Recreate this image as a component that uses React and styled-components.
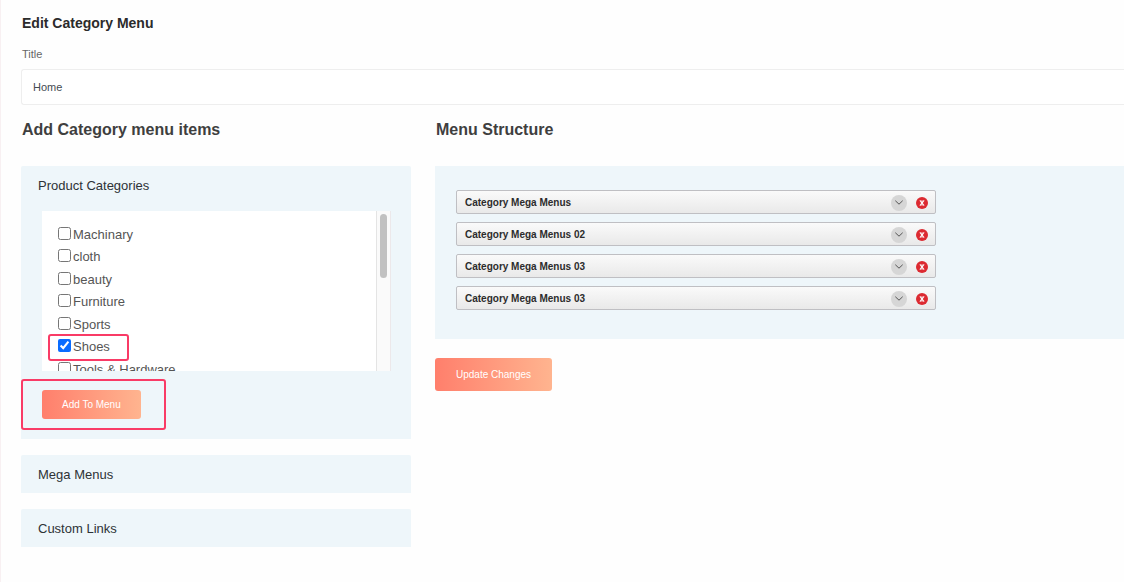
import React, { useState } from 'react';
import styled, { createGlobalStyle, css } from 'styled-components';

const GlobalStyle = createGlobalStyle`
	* {
		box-sizing: border-box;
	}

	body {
		margin: 0;
		background: #fefefe;
		font-family: 'Liberation Sans', Arial, sans-serif;
		color: #333;
	}

	h1, h2, h3, ul {
		margin: 0;
		padding: 0;
	}

	button, input {
		font-family: inherit;
	}
`;

const Page = styled.main`
	min-height: 100vh;
	padding: 14px 0 35px 20px;
	border-left: 1px solid #f8f0f2;
	overflow: hidden;
`;

const PageTitle = styled.h1`
	padding-left: 1px;
	font-size: 14px;
	line-height: 18px;
	color: #2b2b2b;
`;

const Field = styled.div`
	display: flex;
	flex-direction: column;
	gap: 8px;
	margin-top: 15px;
`;

const FieldLabel = styled.label`
	padding-left: 1px;
	font-size: 11px;
	line-height: 14px;
	color: #666;
`;

const TextInput = styled.input`
	width: 100%;
	height: 36px;
	padding: 0 11px;
	border: 1px solid #eee;
	border-right: 0;
	border-radius: 3px 0 0 3px;
	background: #fff;
	font-size: 11px;
	color: #444b52;
`;

const Columns = styled.div`
	display: grid;
	grid-template-columns: 390px minmax(0, 1fr);
	column-gap: 24px;
	align-items: start;
	margin-top: 15px;
`;

const ColumnTitle = styled.h2`
	padding-left: 1px;
	margin-bottom: 26px;
	font-size: 16px;
	line-height: 20px;
	color: #3f3f3f;
`;

const Accordion = styled.div`
	display: flex;
	flex-direction: column;
	gap: 16px;
`;

const Panel = styled.section`
	background: #eef6fa;
	border-radius: 2px 2px 0 0;
`;

const PanelHeader = styled.button`
	display: block;
	width: 100%;
	height: 38px;
	padding: 0 17px;
	border: 0;
	background: none;
	font-size: 13px;
	text-align: left;
	color: #2d3236;
	cursor: pointer;
`;

const PanelBody = styled.div`
	padding: 7px 20px 20px 21px;
`;

const ScrollBox = styled.div`
	display: flex;
	height: 160px;
	background: #fff;
`;

const CategoryList = styled.ul`
	flex: 1;
	padding: 13px 16px;
	list-style: none;
	overflow-y: auto;
	scrollbar-width: none;
`;

const ScrollTrack = styled.div`
	width: 15px;
	padding: 3px;
	border-left: 1px solid #e4e4e4;
	border-right: 1px solid #ece8ea;
	background: #fafafa;
`;

const ScrollThumb = styled.div`
	height: 64px;
	border-radius: 4px;
	background: #c1c1c1;
`;

const outline = css`
	position: absolute;
	border: 2px solid #f93b66;
	border-radius: 3px;
	content: '';
	pointer-events: none;
`;

const CategoryItem = styled.li`
	position: relative;
	width: fit-content;
	height: 22px;

	&:nth-child(even) {
		height: 23px;
	}

	${({ $marked }) =>
		$marked &&
		css`
			&::after {
				${outline}
				inset: -2px -19px -2px -10px;
			}
		`}
`;

const CategoryLabel = styled.label`
	display: flex;
	align-items: center;
	gap: 2px;
	font-size: 13px;
	line-height: 22px;
	color: #555;

	input {
		width: 13px;
		height: 13px;
		margin: 0 0 3px;
		accent-color: #0a6cff;
	}
`;

const ButtonArea = styled.div`
	position: relative;
	width: fit-content;
	margin-top: 19px;

	&::after {
		${outline}
		inset: -11px -25px -11px -21px;
	}
`;

const GradientButton = styled.button`
	display: block;
	height: ${({ $large }) => ($large ? 33 : 29)}px;
	padding: 0 ${({ $large }) => ($large ? 21 : 20)}px;
	border: 0;
	border-radius: 3px;
	background: linear-gradient(to right, #ff7f6c, #ffb48f);
	font-size: 10px;
	color: #fff;
	cursor: pointer;
`;

const Structure = styled.div`
	min-height: 173px;
	margin-bottom: 19px;
	padding: 24px 21px;
	background: #eef6fa;
`;

const MenuList = styled.ul`
	display: flex;
	flex-direction: column;
	gap: 8px;
	max-width: 480px;
	list-style: none;
`;

const MenuItem = styled.li`
	display: flex;
	align-items: center;
	gap: 9px;
	height: 24px;
	padding: 2px 7px 0 8px;
	border: 1px solid #bfbfc3;
	border-radius: 2px;
	background: linear-gradient(#fafafa, #e9e9e9);
`;

const MenuName = styled.strong`
	flex: 1;
	font-size: 10px;
	line-height: 16px;
	color: #2c2c2c;
`;

const IconButton = styled.button`
	display: flex;
	padding: 0;
	border: 0;
	background: none;
	cursor: pointer;
`;

const ExpandIcon = () => (
	<svg width="16" height="16" viewBox="0 0 16 16">
		<circle cx="8" cy="8" r="8" fill="#d6d6d6" />
		<path d="M4.3 5.7 8 9.2l3.7-3.5" fill="none" stroke="#555" strokeWidth="1" />
	</svg>
);

const RemoveIcon = () => (
	<svg width="12" height="12" viewBox="0 0 12 12">
		<circle cx="6" cy="6" r="6" fill="#dc2a31" />
		<path d="M4.5 3.8 7.5 8.2M7.5 3.8 4.5 8.2" stroke="#fff" strokeWidth="1.3" />
		<path d="M3.6 3.7h1.9M6.5 3.7h1.9M3.6 8.3h1.9M6.5 8.3h1.9" stroke="#fff" strokeWidth=".7" />
	</svg>
);

const categories = ['Machinary', 'cloth', 'beauty', 'Furniture', 'Sports', 'Shoes', 'Tools & Hardware'];

const initialMenus = [
	{ id: 1, name: 'Category Mega Menus' },
	{ id: 2, name: 'Category Mega Menus 02' },
	{ id: 3, name: 'Category Mega Menus 03' },
	{ id: 4, name: 'Category Mega Menus 03' },
];

const ProductCategories = () => {
	const [checked, setChecked] = useState(['Shoes']);

	const toggle = (name) => {
		setChecked(checked.includes(name) ? checked.filter((c) => c !== name) : [...checked, name]);
	};

	return (
		<Panel>
			<PanelHeader type="button">Product Categories</PanelHeader>
			<PanelBody>
				<ScrollBox>
					<CategoryList>
						{categories.map((name) => (
							<CategoryItem key={name} $marked={name === 'Shoes'}>
								<CategoryLabel>
									<input
										type="checkbox"
										checked={checked.includes(name)}
										onChange={() => toggle(name)}
									/>
									{name}
								</CategoryLabel>
							</CategoryItem>
						))}
					</CategoryList>
					<ScrollTrack>
						<ScrollThumb />
					</ScrollTrack>
				</ScrollBox>
				<ButtonArea>
					<GradientButton type="button">Add To Menu</GradientButton>
				</ButtonArea>
			</PanelBody>
		</Panel>
	);
};

const App = () => {
	const [title, setTitle] = useState('Home');
	const [menus, setMenus] = useState(initialMenus);

	return (
		<>
			<GlobalStyle />
			<Page>
				<PageTitle>Edit Category Menu</PageTitle>
				<Field>
					<FieldLabel htmlFor="title">Title</FieldLabel>
					<TextInput id="title" value={title} onChange={(e) => setTitle(e.target.value)} />
				</Field>

				<Columns>
					<div>
						<ColumnTitle>Add Category menu items</ColumnTitle>
						<Accordion>
							<ProductCategories />
							<Panel>
								<PanelHeader type="button">Mega Menus</PanelHeader>
							</Panel>
							<Panel>
								<PanelHeader type="button">Custom Links</PanelHeader>
							</Panel>
						</Accordion>
					</div>

					<div>
						<ColumnTitle>Menu Structure</ColumnTitle>
						<Structure>
							<MenuList>
								{menus.map(({ id, name }) => (
									<MenuItem key={id}>
										<MenuName>{name}</MenuName>
										<IconButton type="button">
											<ExpandIcon />
										</IconButton>
										<IconButton
											type="button"
											onClick={() => setMenus(menus.filter((m) => m.id !== id))}
										>
											<RemoveIcon />
										</IconButton>
									</MenuItem>
								))}
							</MenuList>
						</Structure>
						<GradientButton type="button" $large>
							Update Changes
						</GradientButton>
					</div>
				</Columns>
			</Page>
		</>
	);
};

export default App;
